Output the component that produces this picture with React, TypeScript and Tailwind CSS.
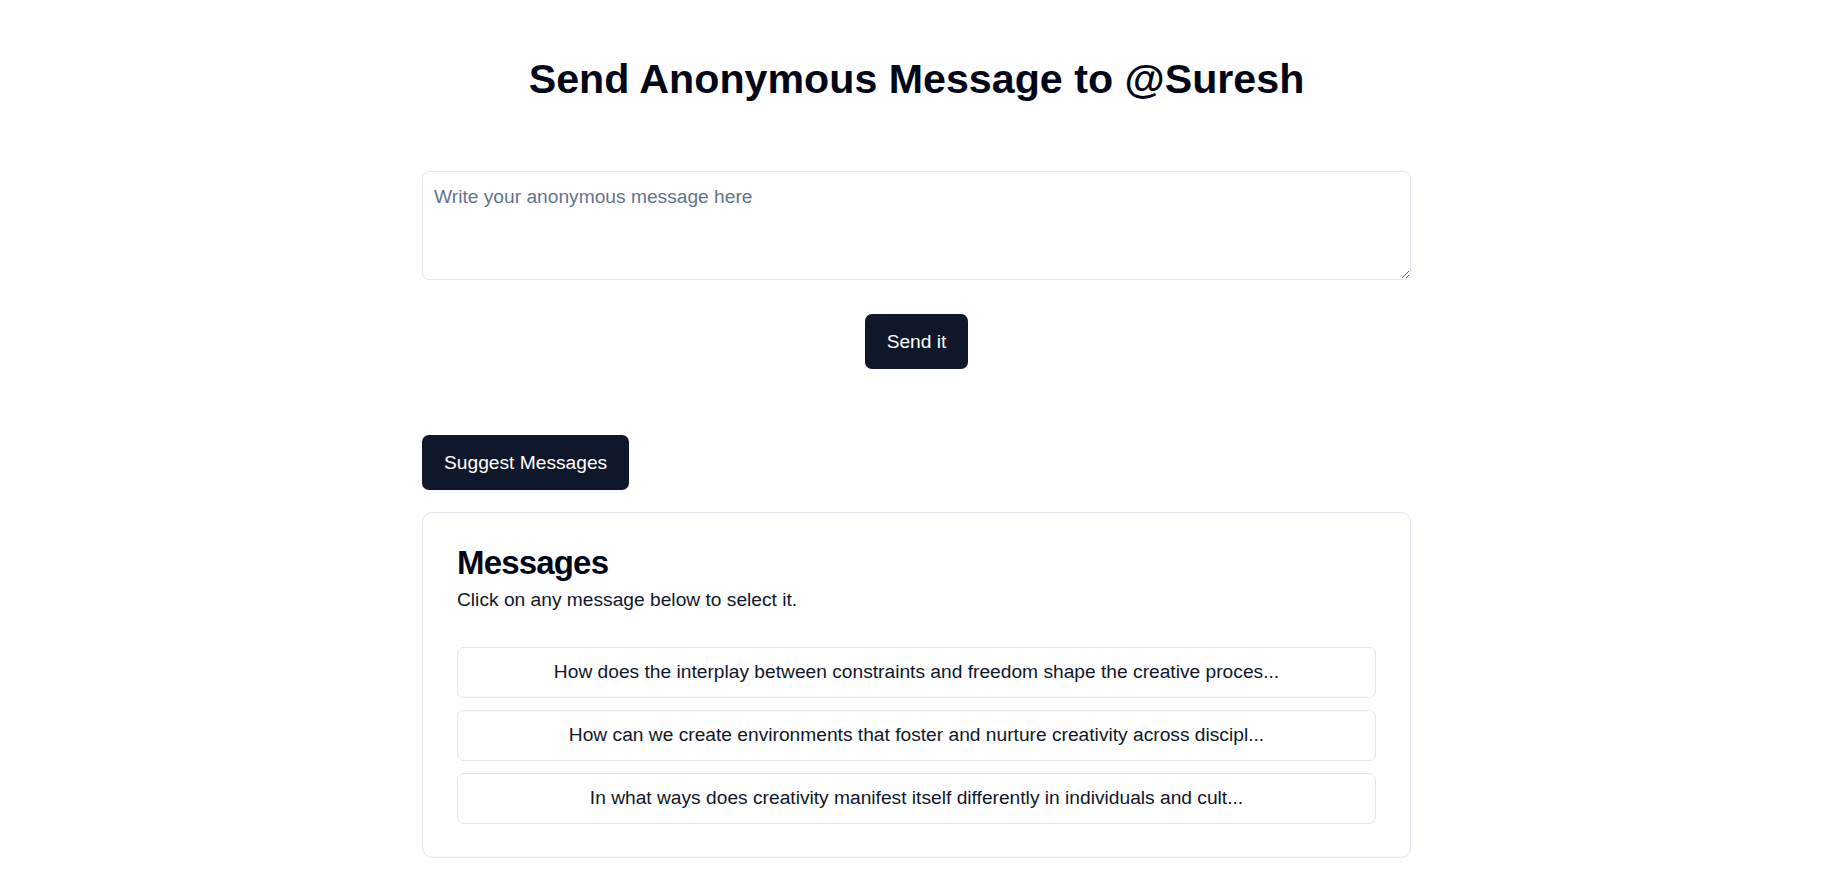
import { useState } from "react";

const suggestions = [
  "How does the interplay between constraints and freedom shape the creative proces...",
  "How can we create environments that foster and nurture creativity across discipl...",
  "In what ways does creativity manifest itself differently in individuals and cult...",
];

export default function App() {
  const [message, setMessage] = useState("");

  return (
    <div className="min-h-screen bg-white font-['Liberation_Sans',Arial,sans-serif] text-[#0f172a]">
      <div className="flex justify-center pl-[12px]">
        <div className="flex w-[989px] flex-col">
          <h1 className="mt-[56px] text-center text-[41.2px] font-bold leading-[46.4px] text-[#020617]">
            Send Anonymous Message to @Suresh
          </h1>

          <textarea
            value={message}
            onChange={(e) => setMessage(e.target.value)}
            placeholder="Write your anonymous message here"
            className="mt-[69px] h-[109px] w-full rounded-[7px] border border-[#e2e8f0] bg-white pb-[9px] pt-[11px] pl-[11px] pr-[14px] text-[19.2px] leading-[27.9px] text-[#0f172a] outline-none placeholder:text-[#64748b]"
          />

          <div className="mt-[34px] flex justify-center">
            <button className="h-[55px] rounded-[7px] bg-[#0f172a] px-[22px] text-[19.2px] text-white">
              Send it
            </button>
          </div>

          <div className="mt-[66px]">
            <button className="h-[55px] rounded-[7px] bg-[#0f172a] px-[22px] text-[19.2px] text-white">
              Suggest Messages
            </button>
          </div>

          <section className="mt-[22px] rounded-[10px] border border-[#e2e8f0] bg-white px-[34px] pb-[33px] pt-[33px]">
            <h2 className="text-[33px] font-bold leading-[33px] tracking-tight text-[#020617]">
              Messages
            </h2>
            <p className="mt-[7px] text-[19.2px] leading-[27.9px] text-[#0f172a]">
              Click on any message below to select it.
            </p>

            <div className="mt-[33px] flex flex-col gap-[12px]">
              {suggestions.map((s) => (
                <button
                  key={s}
                  onClick={() => setMessage(s)}
                  className="flex h-[51px] w-full items-center justify-center rounded-[7px] border border-[#e2e8f0] bg-white text-[19.2px] text-[#0f172a]"
                >
                  {s}
                </button>
              ))}
            </div>
          </section>
        </div>
      </div>
    </div>
  );
}
